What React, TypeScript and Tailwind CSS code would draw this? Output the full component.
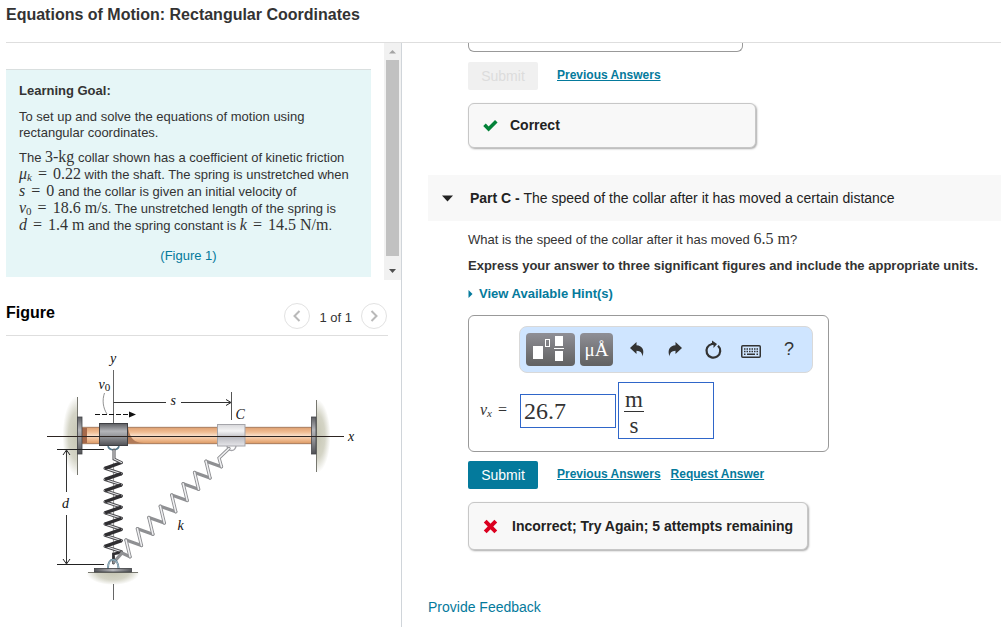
import React from "react";

const range = (n: number) => Array.from({ length: n }, (_, i) => i);

function M({ children }: { children: React.ReactNode }) {
  return (
    <span className="whitespace-nowrap font-['Liberation_Serif',serif] text-[16px] leading-none">
      {children}
    </span>
  );
}

function Sub({ children }: { children: React.ReactNode }) {
  return <span className="align-[-2px] text-[11px] leading-none">{children}</span>;
}

function Eq() {
  return <span className="mx-1.5">=</span>;
}

function Chevron({ left }: { left?: boolean }) {
  return (
    <svg width="24" height="24" viewBox="0 0 24 24" fill="none" stroke="#b9b9b9" strokeWidth="2" aria-hidden="true">
      <path d={left ? "M14.5 7 L9.5 12 L14.5 17" : "M9.5 7 L14.5 12 L9.5 17"} />
    </svg>
  );
}

function ScrollBar() {
  return (
    <div className="flex w-[17px] shrink-0 flex-col items-center bg-[#f1f1f1]" aria-hidden="true">
      <svg width="17" height="17" viewBox="0 0 17 17">
        <path d="M5 10.5 L8.5 7 L12 10.5 Z" fill="#a3a3a3" />
      </svg>
      <div className="w-[13px] flex-1 bg-[#c1c1c1]" />
      <svg width="17" height="24" viewBox="0 0 17 24">
        <path d="M5 13 L12 13 L8.5 17 Z" fill="#505050" />
      </svg>
    </div>
  );
}

function CollarDiagram() {
  const top = (n: number): [number, number] => [126 + 11.43 * n, 540 - 11.25 * n];
  const bottom = (n: number): [number, number] => [130 + 11.43 * n, 556.7 - 11.25 * n];
  const line = (a: [number, number], b: [number, number]) => `M${a[0]} ${a[1]} L${b[0]} ${b[1]} `;
  const steep = range(8).map((n) => line(top(n), bottom(n))).join("");
  const shallow = range(8).map((n) => line(top(n), bottom(n + 1))).join("");
  const coilBack = range(8)
    .map((n) => line([105, 468.3 + 11.15 * n], [121.5, 473.7 + 11.15 * n]))
    .join("");
  const coilFront = range(8)
    .map((n) => line([105, 468.3 + 11.15 * n], [121.5, 462.5 + 11.15 * n]))
    .join("");
  return (
    <svg
      width="320"
      height="256"
      viewBox="43 347 320 256"
      role="img"
      aria-label="Collar on a horizontal shaft attached to a spring"
      fontFamily="Liberation Serif, serif"
      fontStyle="italic"
      fontSize="14"
      fill="#111"
    >
      <defs>
        <linearGradient id="rod" x1="0" y1="0" x2="0" y2="1">
          <stop offset="0" stopColor="#dd9d6e" />
          <stop offset="0.3" stopColor="#f0bd93" />
          <stop offset="0.5" stopColor="#f8dcc5" />
          <stop offset="0.75" stopColor="#efba8f" />
          <stop offset="1" stopColor="#d9955f" />
        </linearGradient>
        <linearGradient id="steel" x1="0" y1="0" x2="0" y2="1">
          <stop offset="0" stopColor="#5d5e62" />
          <stop offset="0.35" stopColor="#b4b5b9" />
          <stop offset="0.65" stopColor="#8b8c90" />
          <stop offset="1" stopColor="#505155" />
        </linearGradient>
        <linearGradient id="ghost" x1="0" y1="0" x2="0" y2="1">
          <stop offset="0" stopColor="#d7d7da" />
          <stop offset="0.3" stopColor="#f4f4f5" />
          <stop offset="0.6" stopColor="#bcbcc2" />
          <stop offset="1" stopColor="#e6e6e9" />
        </linearGradient>
        <linearGradient id="base" x1="0" y1="0" x2="1" y2="0">
          <stop offset="0" stopColor="#55565a" />
          <stop offset="0.5" stopColor="#b5b6ba" />
          <stop offset="1" stopColor="#55565a" />
        </linearGradient>
        <radialGradient id="wall">
          <stop offset="0" stopColor="#c5c5b2" />
          <stop offset="0.6" stopColor="#d4d4c6" />
          <stop offset="1" stopColor="#ffffff" />
        </radialGradient>
        <clipPath id="wallLeft"><rect x="60" y="390" width="17.5" height="90" /></clipPath>
        <clipPath id="wallRight"><rect x="316.5" y="390" width="20" height="90" /></clipPath>
        <clipPath id="ground"><rect x="85" y="572" width="60" height="16" /></clipPath>
      </defs>

      <ellipse cx="77.5" cy="436" rx="15" ry="40" fill="url(#wall)" clipPath="url(#wallLeft)" />
      <ellipse cx="316.5" cy="436" rx="14" ry="37" fill="url(#wall)" clipPath="url(#wallRight)" />
      <ellipse cx="113" cy="572" rx="27" ry="13" fill="url(#wall)" clipPath="url(#ground)" />
      <path d="M77.5 397 V475 M316.5 400 V472 M88 572.5 H138" stroke="#77776f" />

      <rect x="82" y="427" width="230" height="17" fill="url(#rod)" />
      <path d="M82 427.3 H312 M82 443.7 H312" stroke="#9a7a63" strokeWidth="0.8" />
      <path d="M82 428 H87 V443 H82 Z" fill="#a5694a" />
      <path d="M128 428 C130 438 134 443 144 443 H128 Z" fill="#b07a58" />
      <rect x="77.5" y="417" width="4.5" height="37" fill="url(#steel)" stroke="#45464a" strokeWidth="0.8" />
      <rect x="311.5" y="417" width="4.5" height="37" fill="url(#steel)" stroke="#45464a" strokeWidth="0.8" />

      <path d="M108 446 C109 451 118 451 119 446" fill="none" stroke="#55798b" strokeWidth="1.6" />
      <rect x="99.5" y="423.5" width="28" height="22" fill="url(#steel)" stroke="#3e3f43" />
      <path d="M227 446 C228 452 235 452 236 446" fill="none" stroke="#a5a5aa" strokeWidth="1.5" />
      <rect x="217.5" y="424.5" width="27.5" height="21.5" fill="url(#ghost)" stroke="#a5a5aa" />
      <path d="M47 436.5 H344" stroke="#2d2522" />

      <path d="M113.5 370 V423" stroke="#666" />
      <path d="M113.5 584 V600" stroke="#666" />
      <path d="M113.5 402.5 H166 M181 402.5 H230" stroke="#333" />
      <path d="M226 399.5 L231 402.5 L226 405.5" fill="none" stroke="#222" />
      <path d="M231.5 392 V420" stroke="#555" />
      <path d="M95 414.5 H130" stroke="#111" strokeDasharray="5 2" />
      <path d="M129 411.5 L136 414.5 L129 417.5 Z" />
      <path d="M104.5 393 C102 400 103 408 107 414" fill="none" stroke="#777" strokeWidth="0.8" />

      <path d="M57 449.5 H104 M57 564.5 H104" stroke="#222" />
      <path d="M66.5 451 V492 M66.5 515 V563" stroke="#333" />
      <path d="M63 455 L66.5 450 L70 455 M63 559 L66.5 564 L70 559" fill="none" stroke="#222" />

      <g fill="none" strokeLinecap="round">
        <path d="M113.5 463 V552" stroke="#999" strokeWidth="1.2" />
        <path d={coilBack} stroke="#4b4b4e" strokeWidth="3" />
        <path d={coilBack} stroke="#e9e9ec" strokeWidth="1.1" />
        <path d={coilFront} stroke="#2f2e31" strokeWidth="3.4" strokeLinecap="butt" />
        <path d="M114 450 V459 L121.5 462.5" stroke="#4b4b4e" strokeWidth="3" />
        <path d="M114 450 V459 L121.5 462.5" stroke="#e9e9ec" strokeWidth="1.1" />
        <path d="M121 552.5 L113.5 554 V563" stroke="#2f2e31" strokeWidth="2.8" />
        <path d={shallow} stroke="#8f9093" strokeWidth="3.3" />
        <path d="M114 562 L122 553 L130 556.7" stroke="#8f9093" strokeWidth="3.3" />
        <path d={steep} stroke="#8f9093" strokeWidth="3.3" />
        <path d={steep} stroke="#f2f2f4" strokeWidth="1.5" />
        <path d="M221.5 466.7 L219 458 L229 448.5" stroke="#8f9093" strokeWidth="3.3" />
        <path d="M221.5 466.7 L219 458 L229 448.5" stroke="#f2f2f4" strokeWidth="1.5" />
        <path d="M108 568 C108 557 118 557 118.5 568" stroke="#55798b" strokeWidth="2" />
        <path d="M108 568 C108 557 118 557 118.5 568" stroke="#cfe0e8" strokeWidth="0.7" />
      </g>
      <rect x="94.5" y="568.5" width="37" height="3.5" fill="url(#base)" stroke="#3e3f43" strokeWidth="0.8" />

      <text x="110" y="363">y</text>
      <text x="98.5" y="389">v<tspan fontStyle="normal" fontSize="11" dy="2">0</tspan></text>
      <text x="170.5" y="405">s</text>
      <text x="235.5" y="419">C</text>
      <text x="348" y="441">x</text>
      <text x="62" y="508">d</text>
      <text x="177.5" y="530">k</text>
    </svg>
  );
}

const toolIcon = "flex h-[33px] w-[38px] items-center justify-center text-[#333]";

function Toolbar() {
  return (
    <div className="ml-[50px] flex h-[47px] w-[294px] items-center rounded-lg border border-[#d9d9d9] bg-[#cfe5ff] pl-1.5">
      <button aria-label="Templates" className="flex h-[33px] w-[49px] items-center justify-center rounded bg-linear-to-b from-[#8f8f96] to-[#616161]">
        <svg width="49" height="33" viewBox="0 0 49 33" fill="#fff">
          <rect x="7" y="13" width="10" height="13" />
          <rect x="19.5" y="6.5" width="4" height="7" fill="none" stroke="#fff" />
          <rect x="29" y="3" width="8" height="10" />
          <rect x="28" y="15" width="10" height="1" />
          <rect x="29" y="18" width="8" height="10" />
        </svg>
      </button>
      <button aria-label="Symbols" className="ml-[5px] h-[33px] w-[33px] rounded bg-linear-to-b from-[#8f8f96] to-[#616161] font-['Liberation_Serif',serif] text-[19px] leading-[33px] text-white">
        μÅ
      </button>
      <div className="ml-[5px] flex">
        <button aria-label="Undo" className={toolIcon}>
          <svg width="16" height="18" viewBox="0 0 16 18" fill="currentColor">
            <path d="M1 7 L7.5 1 V4.3 C13 4.5 16 9 13.4 15.5 C13.3 12 11.5 9.8 7.5 9.7 V13 Z" />
          </svg>
        </button>
        <button aria-label="Redo" className={toolIcon}>
          <svg width="16" height="18" viewBox="0 0 16 18" fill="currentColor">
            <path d="M15 7 L8.5 1 V4.3 C3 4.5 0 9 2.6 15.5 C2.7 12 4.5 9.8 8.5 9.7 V13 Z" />
          </svg>
        </button>
        <button aria-label="Reset" className={toolIcon}>
          <svg width="18" height="20" viewBox="0 0 18 20">
            <path d="M14 5.7 A6.9 6.9 0 1 1 8 4" fill="none" stroke="currentColor" strokeWidth="2.2" />
            <path d="M8 0.5 L13 4 L9.5 8 V5 H7 V3 H8 Z" fill="currentColor" />
          </svg>
        </button>
        <button aria-label="Keyboard shortcuts" className={toolIcon}>
          <svg width="20" height="16" viewBox="0 0 20 16">
            <rect x="0.75" y="3.75" width="18.5" height="11.5" rx="1" fill="none" stroke="currentColor" strokeWidth="1.5" />
            <path d="M3 7 H17 M3 9.5 H17" stroke="currentColor" strokeWidth="1.4" strokeDasharray="1.5 1" />
            <path d="M3 12.3 H4.5 M6 12.3 H14 M15.5 12.3 H17" stroke="currentColor" strokeWidth="1.4" />
          </svg>
        </button>
        <button aria-label="Help" className={toolIcon + " text-[18px]"}>?</button>
      </div>
    </div>
  );
}

const link = "pb-0.5 text-[12px] font-bold text-[#047a9c] underline";
const feedback =
  "flex items-center rounded-md border border-[#c7c7c7] bg-[#f8f8f8] text-[14px] font-bold text-[#222] shadow-[1px_1px_2px_#aaa]";

export default function App() {
  return (
    <div className="flex min-h-screen flex-col bg-white font-['Liberation_Sans',sans-serif] text-[13px] text-[#333]">
      <header className="ml-1.5 border-b border-[#dedede]">
        <h1 className="h-[42px] pt-1 text-[16px] font-bold leading-[22px]">Equations of Motion: Rectangular Coordinates</h1>
      </header>

      <div className="flex flex-1">
        <aside className="w-[402px] shrink-0 border-r border-[#d0d5da]">
          <div className="flex">
            <div className="flex-1 pb-[3px] pl-1.5 pr-[13px] pt-[26px]">
              <section className="border-t border-[#d9dfdf] bg-[#e6f6f7] px-[13px] pb-3 pt-3">
                <h2 className="text-[13px] font-bold leading-[18px]">Learning Goal:</h2>
                <p className="mt-[9px] leading-4">To set up and solve the equations of motion using rectangular coordinates.</p>
                <div className="mt-2 whitespace-nowrap leading-[17px]">
                  <p className="h-[17px]">The <M>3-kg</M> collar shown has a coefficient of kinetic friction</p>
                  <p className="h-[17px]"><M><i>μ<Sub>k</Sub></i><Eq />0.22</M> with the shaft. The spring is unstretched when</p>
                  <p className="h-[17px]"><M><i>s</i><Eq />0</M> and the collar is given an initial velocity of</p>
                  <p className="h-[17px]"><M><i>v</i><Sub>0</Sub><Eq />18.6 m/s</M>. The unstretched length of the spring is</p>
                  <p className="h-[17px]"><M><i>d</i><Eq />1.4 m</M> and the spring constant is <M><i>k</i><Eq />14.5 N/m</M>.</p>
                </div>
                <p className="mt-[13px] text-center leading-[18px] text-[#047a9c]">
                  (<a href="#figure">Figure 1</a>)
                </p>
              </section>
            </div>
            <ScrollBar />
          </div>

          <section id="figure" className="pl-1.5 pr-[13px]">
            <div className="flex h-14 items-center justify-between border-b border-[#dedede]">
              <h2 className="pt-2.5 text-[16px] font-bold text-black">Figure</h2>
              <div className="flex items-center pr-px pt-4">
                <button aria-label="Previous figure" className="rounded-full border border-[#e2e2e2]">
                  <Chevron left />
                </button>
                <span className="mx-[9px] pt-1">1 of 1</span>
                <button aria-label="Next figure" className="rounded-full border border-[#e2e2e2]">
                  <Chevron />
                </button>
              </div>
            </div>
            <div className="pl-[37px] pt-[11px]">
              <CollarDiagram />
            </div>
          </section>
        </aside>

        <main className="flex-1 pl-[26px]">
          <div className="pl-10">
            <div className="h-[9px] w-[275px] rounded-b-md border border-t-0 border-[#999]" />
            <div className="mt-2.5 flex items-center">
              <button disabled className="h-7 w-[70px] rounded-xs bg-[#f0f0f0] text-[14px] text-[#dcdcdc]">Submit</button>
              <a href="#previous-b" className={link + " ml-[19px]"}>Previous Answers</a>
            </div>
            <div className={feedback + " mt-[13px] h-[45px] w-72 pl-3.5"}>
              <svg width="15" height="14" viewBox="0 0 15 14" aria-hidden="true">
                <path d="M1.5 5.8 L5.6 9.9 L13.3 2.200" fill="none" stroke="#038238" strokeWidth="3.600" />
              </svg>
              <span className="ml-3">Correct</span>
            </div>
          </div>

          <h2 className="mt-[27px] flex h-[46px] items-center bg-[#f8f8f8] pl-3.5 text-[14px] text-[#222]">
            <svg width="11" height="7" viewBox="0 0 11 7" aria-hidden="true">
              <path d="M0 0.5 H11 L5.5 6.5 Z" fill="#222" />
            </svg>
            <span className="ml-[17px]"><b>Part C -</b> The speed of the collar after it has moved a certain distance</span>
          </h2>

          <div className="pl-10">
            <p className="mt-[9px] h-5 leading-5">What is the speed of the collar after it has moved <M>6.5 m</M>?</p>
            <p className="mt-1.5 font-bold leading-5">Express your answer to three significant figures and include the appropriate units.</p>
            <a href="#hints" className="mt-2 flex w-fit items-center font-bold leading-5 text-[#047a9c]">
              <svg width="5" height="8" viewBox="0 0 5 8" className="mr-1.5" aria-hidden="true">
                <path d="M0.5 0 L4.5 4 L0.5 8 Z" fill="#047a9c" />
              </svg>
              View Available Hint(s)
            </a>

            <div className="mt-[11px] w-fit rounded-md border border-[#999] pb-3 pr-[15px] pt-2.5">
              <Toolbar />
              <div className="mt-[9px] flex items-center">
                <label htmlFor="value" className="w-[51px] whitespace-nowrap pl-[11px] font-['Liberation_Serif',serif] text-[16px] leading-none">
                  <i>v<Sub>x</Sub></i><Eq />
                </label>
                <input
                  id="value"
                  defaultValue="26.7"
                  className="h-[34px] w-24 border border-[#2f66c9] bg-white px-[3px] font-['Liberation_Serif',serif] text-[24px]"
                />
                <div role="group" aria-label="Units" className="ml-0.5 h-[57px] w-24 border border-[#2f66c9] px-[5px] pt-[5px] font-['Liberation_Serif',serif] text-[23px] leading-6">
                  <input aria-label="Unit numerator" defaultValue="m" className="block h-6 w-5 border-b border-[#333] text-center" />
                  <input aria-label="Unit denominator" defaultValue="s" className="block h-7 w-5 text-center" />
                </div>
              </div>
            </div>

            <div className="mt-[9px] flex items-center">
              <button className="h-7 w-[70px] rounded-xs bg-[#047a9c] text-[14px] text-white">Submit</button>
              <a href="#previous-c" className={link + " ml-[19px]"}>Previous Answers</a>
              <a href="#request" className={link + " ml-2.5"}>Request Answer</a>
            </div>
            <div className={feedback + " mt-[13px] h-12 w-fit px-3.5"}>
              <svg width="15" height="15" viewBox="0 0 15 15" aria-hidden="true">
                <path d="M2.2 2.2 L12.8 12.8 M12.8 2.2 L2.2 12.8" stroke="#db0020" strokeWidth="4" />
              </svg>
              <span className="ml-3.5">Incorrect; Try Again; 5 attempts remaining</span>
            </div>
          </div>

          <a href="#feedback" className="mt-[47px] block w-fit text-[14px] leading-5 text-[#047a9c]">Provide Feedback</a>
        </main>
      </div>
    </div>
  );
}
